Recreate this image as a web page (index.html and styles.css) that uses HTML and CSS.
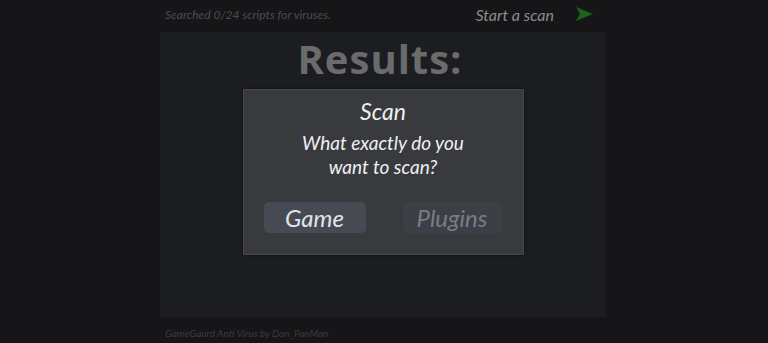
FILE: index.html
```html
<!DOCTYPE html>
<html>
<head>
<meta charset="utf-8">
<link rel="stylesheet" href="styles.css">
</head>
<body>
<div class="app">
  <header class="topbar">
    <span class="status">Searched 0/24 scripts for viruses.</span>
    <button class="start">
      <span class="start-label">Start a scan</span>
      <svg class="arrow" width="17" height="14" viewBox="0 0 17 14"><polygon points="0,0 17,7 0,14 4,7" fill="#1b621c"/></svg>
    </button>
  </header>
  <main class="panel">
    <h1 class="results">Results:</h1>
    <section class="dialog">
      <h2 class="dialog-title">Scan</h2>
      <p class="dialog-text">What exactly do you<br>want to scan?</p>
      <div class="choices">
        <button class="choice choice-game">Game</button>
        <button class="choice choice-plugins">Plugins</button>
      </div>
    </section>
  </main>
  <footer class="footer">GameGaurd Anti Virus by Dan_PanMan</footer>
</div>
</body>
</html>
```
FILE: styles.css
```css
html, body {
  margin: 0;
  padding: 0;
  background: #161618;
  height: 100%;
  overflow: hidden;
}
.app {
  width: 768px;
  height: 343px;
  display: flex;
  flex-direction: column;
  font-family: "Lato", "Liberation Sans", sans-serif;
}
.topbar {
  height: 28px;
  margin-bottom: 4px;
  display: flex;
  align-items: center;
  padding-left: 165px;
  padding-right: 175px;
  box-sizing: border-box;
}
.status {
  font-style: italic;
  font-size: 12px;
  color: #4b4c4f;
  flex: 1;
}
.start {
  background: none;
  border: 0;
  padding: 0;
  display: flex;
  align-items: center;
  gap: 22px;
  font-family: inherit;
  cursor: pointer;
}
.start-label {
  font-style: italic;
  font-size: 16px;
  color: #8b8c8f;
}
.arrow {
  display: block;
}
.panel {
  margin-left: 160px;
  width: 446px;
  height: 285px;
  background: #1c1d20;
  display: flex;
  flex-direction: column;
  align-items: center;
}
.results {
  margin: 2px 0 0 0;
  font-family: "Open Sans", "Lato", sans-serif;
  font-size: 40px;
  line-height: 50px;
  font-weight: 700;
  color: #6a6b6c;
  letter-spacing: 1px;
  padding-right: 6px;
}
.dialog {
  margin-top: 5px;
  width: 281px;
  height: 166px;
  box-sizing: border-box;
  background: #393a3e;
  border: 1px solid #45464a;
  box-shadow: 0 0 3px rgba(0,0,0,0.6);
  display: flex;
  flex-direction: column;
  align-items: center;
  color: #eef0f3;
}
.dialog-title {
  margin: 7px 0 0 0;
  font-size: 23px;
  line-height: 28px;
  font-weight: 400;
  font-style: italic;
}
.dialog-text {
  margin: 6px 0 0 0;
  text-align: center;
  font-size: 19px;
  line-height: 24px;
  font-style: italic;
}
.choices {
  margin-top: 23px;
  width: 100%;
  display: flex;
  justify-content: space-between;
  padding: 0 21px 0 20px;
  box-sizing: border-box;
}
.choice {
  height: 31px;
  border: 0;
  border-radius: 5px;
  font-family: inherit;
  font-style: italic;
  font-size: 24px;
  line-height: 31px;
  padding: 0;
}
.choice-game {
  width: 102px;
  background: #474a52;
  color: #e1e4ea;
}
.choice-plugins {
  width: 99px;
  background: #3c3f46;
  color: #777c85;
}
.footer {
  margin-top: 10px;
  padding-left: 165px;
  font-size: 10px;
  font-style: italic;
  color: #3b3c3f;
}
```
